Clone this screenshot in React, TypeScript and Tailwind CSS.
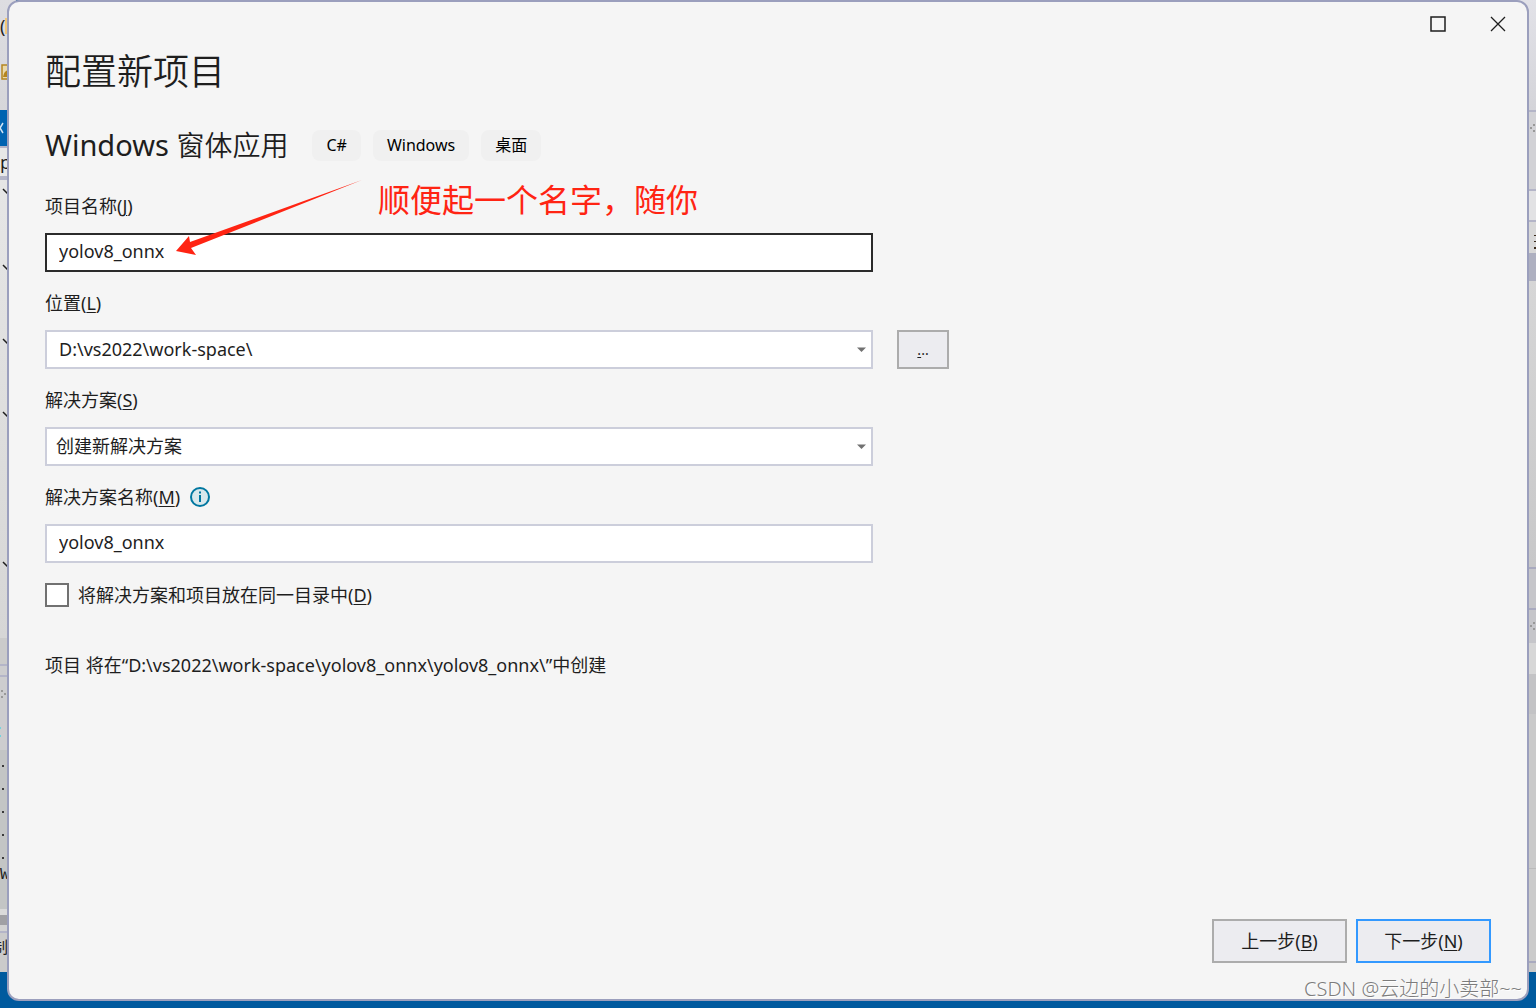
import { useState } from "react";
import type { ReactNode } from "react";

function Mnemonic({ text, letter }: { text: string; letter: string }) {
  return (
    <span>
      {text}(<u className="underline decoration-1 underline-offset-2">{letter}</u>)
    </span>
  );
}

function Field({ id, label, after, children }: { id: string; label: ReactNode; after?: ReactNode; children: ReactNode }) {
  return (
    <div>
      <div className="flex h-[58px] items-center gap-[10px] pt-1">
        <label htmlFor={id}>{label}</label>
        {after}
      </div>
      {children}
    </div>
  );
}

function Combo({ id, value, pad }: { id: string; value: string; pad: string }) {
  return (
    <div className="relative min-w-0 max-w-[828px] flex-1">
      <select
        id={id}
        defaultValue={value}
        className={`h-[39px] w-full appearance-none rounded-none border-2 border-[#cccedb] bg-white pb-[2px] outline-none ${pad}`}
      >
        <option>{value}</option>
      </select>
      <svg className="pointer-events-none absolute top-[17px] right-[7px]" width="9" height="6" viewBox="0 0 9 6">
        <path d="M0 0.5H9L4.5 5Z" fill="#717171" />
      </svg>
    </div>
  );
}

function Chevron() {
  return (
    <svg width="9" height="7" viewBox="0 0 9 7" className="shrink-0">
      <path d="M3 1L7.5 5.5" stroke="#1e1e1e" strokeWidth="1.5" fill="none" />
    </svg>
  );
}

function Grip() {
  return (
    <svg width="8" height="10" viewBox="0 0 8 10" className="shrink-0">
      <path d="M4 1h2v2h-2zM1 4h2v2h-2zM4 7h2v2h-2z" fill="#999" />
    </svg>
  );
}

function LeftEdge() {
  return (
    <div className="flex w-4 flex-col overflow-hidden text-[#1e1e1e]">
      <div className="flex h-[110px] flex-col bg-linear-to-b from-[#dddde1] to-[#d6d6da] pt-3">
        <div className="flex h-[28px] items-center text-lg">
          <span>(</span>
          <span className="h-4 w-2 bg-[#f2c879]" />
        </div>
        <svg width="14" height="16" viewBox="0 0 14 16" className="mt-6 ml-px shrink-0">
          <path d="M1 1h12v14H1z" fill="#ead9a9" stroke="#b5851f" strokeWidth="1.5" />
          <path d="M2 13c1-5 3-7 6-7v7z" fill="#b5851f" />
        </svg>
      </div>
      <div className="flex h-9 items-center bg-[#0063b1]">
        <svg width="4" height="12" viewBox="0 0 4 12">
          <path d="M-3 1L0 6L-3 11M3 1L0 6L3 11" stroke="#cfe3f5" strokeWidth="1.5" fill="none" />
        </svg>
      </div>
      <div className="h-[2px] bg-[#b4b5c8]" />
      <div className="flex h-7 items-center bg-[#e8e8e8] text-lg">p</div>
      <div className="h-1 bg-[#b4b5c8]" />
      <div className="flex h-[458px] flex-col bg-linear-to-b from-[#e6e6e6] to-[#d6d6d6] pt-2">
        <div className="h-[76px]"><Chevron /></div>
        <div className="h-[74px]"><Chevron /></div>
        <div className="h-[73px]"><Chevron /></div>
        <div className="h-[150px]"><Chevron /></div>
        <div><Chevron /></div>
      </div>
      <div className="h-[26px] bg-[#cbcbcb]" />
      <div className="h-[2px] bg-[#b4b5c8]" />
      <div className="h-[9px] bg-[#cdcdcf]" />
      <div className="h-[2px] bg-[#b4b5c8]" />
      <div className="flex h-[73px] flex-col gap-7 bg-[#cdcdcf] pt-3">
        <svg width="8" height="10" viewBox="0 0 8 10" className="shrink-0">
          <path d="M1 1h2v2h-2zM4 4h2v2h-2zM1 7h2v2h-2z" fill="#999" />
        </svg>
        <span className="h-[10px] w-px border-y-2 border-[#73d4dc]" />
      </div>
      <div className="flex h-[159px] flex-col bg-[#c3c5c5] pt-[15px]">
        {[0, 1, 2, 3].map((n) => (
          <div key={n} className="h-[23px] shrink-0 pl-[2px]">
            <div className="h-[2px] w-[2px] bg-[#3a3a3a]" />
          </div>
        ))}
        <div className="h-[10px] shrink-0 pl-[2px]">
          <div className="h-[2px] w-[2px] bg-[#3a3a3a]" />
        </div>
        <span className="font-['Liberation_Mono'] text-base leading-none">W</span>
      </div>
      <div className="h-[6px] bg-[#dadada]" />
      <div className="h-[10px] bg-[#a0a0a4]" />
      <div className="h-[6px] bg-[#d2d2d2]" />
      <div className="h-[2px] bg-[#b4b5c8]" />
      <div className="flex h-[39px] items-center justify-end bg-[#cbcbcb] pr-2 pb-3 text-base">制</div>
    </div>
  );
}

function RightEdge() {
  return (
    <div className="flex w-5 flex-col overflow-hidden text-[#1e1e1e]">
      <div className="h-[110px] bg-linear-to-b from-[#e2e2e8] to-[#d4d4d9]" />
      <div className="h-[2px] bg-[#b4b5c8]" />
      <div className="h-[77px] bg-[#d2d2d6] pt-[11px] pl-[13px]">
        <Grip />
      </div>
      <div className="h-[2px] bg-[#b4b5c8]" />
      <div className="h-[29px] bg-[#e2e2e4]" />
      <div className="h-[2px] bg-[#b4b5c8]" />
      <div className="flex h-[31px] flex-col gap-[5px] bg-[#d8d8d8] pt-[13px] pl-[18px]">
        <span className="h-px w-1 bg-[#3a2a1a]" />
        <span className="h-px w-1 bg-[#3a2a1a]" />
        <span className="h-[2px] w-1 bg-[#3a2a1a]" />
      </div>
      <div className="h-7 bg-[#aeb0c0]" />
      <div className="h-[286px] bg-linear-to-b from-[#d6d6d6] to-[#c8c8c9]" />
      <div className="h-[2px] bg-[#a9aabf]" />
      <div className="h-[39px] bg-[#c6c6ca]" />
      <div className="h-[2px] bg-[#a9aabf]" />
      <div className="h-[33px] bg-[#c6c6ca] pt-[11px] pl-[13px]">
        <Grip />
      </div>
      <div className="h-[31px] bg-[#d7d7d7]" />
      <div className="h-10 bg-[#c3c3c5]" />
      <div className="h-[154px] bg-[#cacaca]" />
      <div className="h-px bg-[#bababa]" />
      <div className="h-[92px] bg-[#cbcbcb]" />
      <div className="h-[2px] bg-[#a9aabf]" />
      <div className="h-[9px] bg-[#c8c8c8]" />
    </div>
  );
}

const inputClass =
  "h-[39px] w-full max-w-[828px] rounded-none border-2 bg-white px-3 pb-1 outline-none block";
const buttonClass = "h-11 w-[135px] border-2 bg-[#ececf0]";

export default function App() {
  const [project, setProject] = useState("yolov8_onnx");
  const [solution, setSolution] = useState("yolov8_onnx");

  return (
    <div className="relative flex min-h-screen bg-[#005a9e] px-[7px] pb-[7px] font-['Noto_Sans','Noto_Sans_CJK_SC',sans-serif]">
      <div aria-hidden="true" className="absolute inset-0 flex items-start justify-between">
        <LeftEdge />
        <RightEdge />
      </div>

      <main className="relative flex min-w-0 flex-1 flex-col rounded-xl border-2 border-[#9b9fbd] bg-[#f5f5f5] px-9 pb-9 text-lg leading-6 text-[#1e1e1e]">
        <div className="-mr-[37px] flex h-11 justify-end">
          <button aria-label="最大化" className="flex w-[60px] items-center justify-center">
            <svg width="16" height="16" viewBox="0 0 16 16">
              <path d="M1 1H15V15H1Z" fill="none" stroke="#1e1e1e" strokeWidth="1.5" />
            </svg>
          </button>
          <button aria-label="关闭" className="flex w-[60px] items-center justify-center">
            <svg width="16" height="16" viewBox="0 0 16 16">
              <path d="M1 1L15 15M15 1L1 15" fill="none" stroke="#1e1e1e" strokeWidth="1.3" />
            </svg>
          </button>
        </div>

        <h1 className="text-4xl leading-[52px] font-[350]">配置新项目</h1>

        <div className="mt-[23px] flex h-12 items-center">
          <h2 className="mr-6 text-[29px] leading-10 font-normal">
            Windows <span className="text-[28px] font-[350]">窗体应用</span>
          </h2>
          <ul className="flex gap-3 text-base text-black">
            {["C#", "Windows", "桌面"].map((tag) => (
              <li key={tag} className="flex h-[31px] items-center rounded-lg bg-[#f0f0f0] px-[14px]">
                {tag}
              </li>
            ))}
          </ul>
        </div>

        <form className="mt-1.5" onSubmit={(e) => e.preventDefault()}>
          <div className="relative">
            <Field id="project" label={<Mnemonic text="项目名称" letter="J" />}>
              <input
                id="project"
                value={project}
                onChange={(e) => setProject(e.target.value)}
                className={`${inputClass} border-[#2b2b2b]`}
              />
            </Field>
            <svg className="pointer-events-none absolute top-1 left-[130px]" width="190" height="78" viewBox="0 0 190 78">
              <path d="M1 72L14 57L15 63L187 1L16 69L21 76Z" fill="#ff2413" />
            </svg>
            <p className="pointer-events-none absolute top-1 left-[333px] text-[32px] leading-[42px] whitespace-nowrap text-[#ff2413]">
              顺便起一个名字，随你
            </p>
          </div>

          <Field id="location" label={<Mnemonic text="位置" letter="L" />}>
            <div className="flex gap-6">
              <Combo id="location" value="D:\vs2022\work-space\" pad="pl-3" />
              <button type="button" aria-label="浏览" className="h-[39px] w-[52px] border-2 border-[#acacac] bg-[#ececf0] text-sm">
                <u className="underline-offset-2">.</u>..
              </button>
            </div>
          </Field>

          <Field id="solution-kind" label={<Mnemonic text="解决方案" letter="S" />}>
            <div className="flex">
              <Combo id="solution-kind" value="创建新解决方案" pad="pl-[9px]" />
            </div>
          </Field>

          <Field
            id="solution"
            label={<Mnemonic text="解决方案名称" letter="M" />}
            after={
              <svg width="20" height="20" viewBox="0 0 20 20">
                <circle cx="10" cy="10" r="9" fill="#d9e8ec" stroke="#0077a0" strokeWidth="2" />
                <path d="M9 4.5h2v2H9zM9 8h2v7H9z" fill="#0077a0" />
              </svg>
            }
          >
            <input
              id="solution"
              value={solution}
              onChange={(e) => setSolution(e.target.value)}
              className={`${inputClass} border-[#cccedb]`}
            />
          </Field>

          <label className="mt-5 flex items-center gap-[9px]">
            <input
              type="checkbox"
              className="size-6 shrink-0 appearance-none border-2 border-[#717171] bg-white checked:bg-[#717171]"
            />
            <Mnemonic text="将解决方案和项目放在同一目录中" letter="D" />
          </label>
        </form>

        <p className="mt-[46px]">项目 将在“D:\vs2022\work-space\yolov8_onnx\yolov8_onnx\”中创建</p>

        <div className="mt-auto flex justify-end gap-[9px]">
          <button className={`${buttonClass} border-[#acacac]`}>
            <Mnemonic text="上一步" letter="B" />
          </button>
          <button className={`${buttonClass} border-[#3399ff]`}>
            <Mnemonic text="下一步" letter="N" />
          </button>
        </div>
      </main>

      <p className="pointer-events-none absolute right-[14px] bottom-[7px] text-xl leading-6 font-light text-[#7c7c7c] [text-shadow:1px_1px_0_#ffffff]">
        CSDN @云边的小卖部~~
      </p>
    </div>
  );
}
